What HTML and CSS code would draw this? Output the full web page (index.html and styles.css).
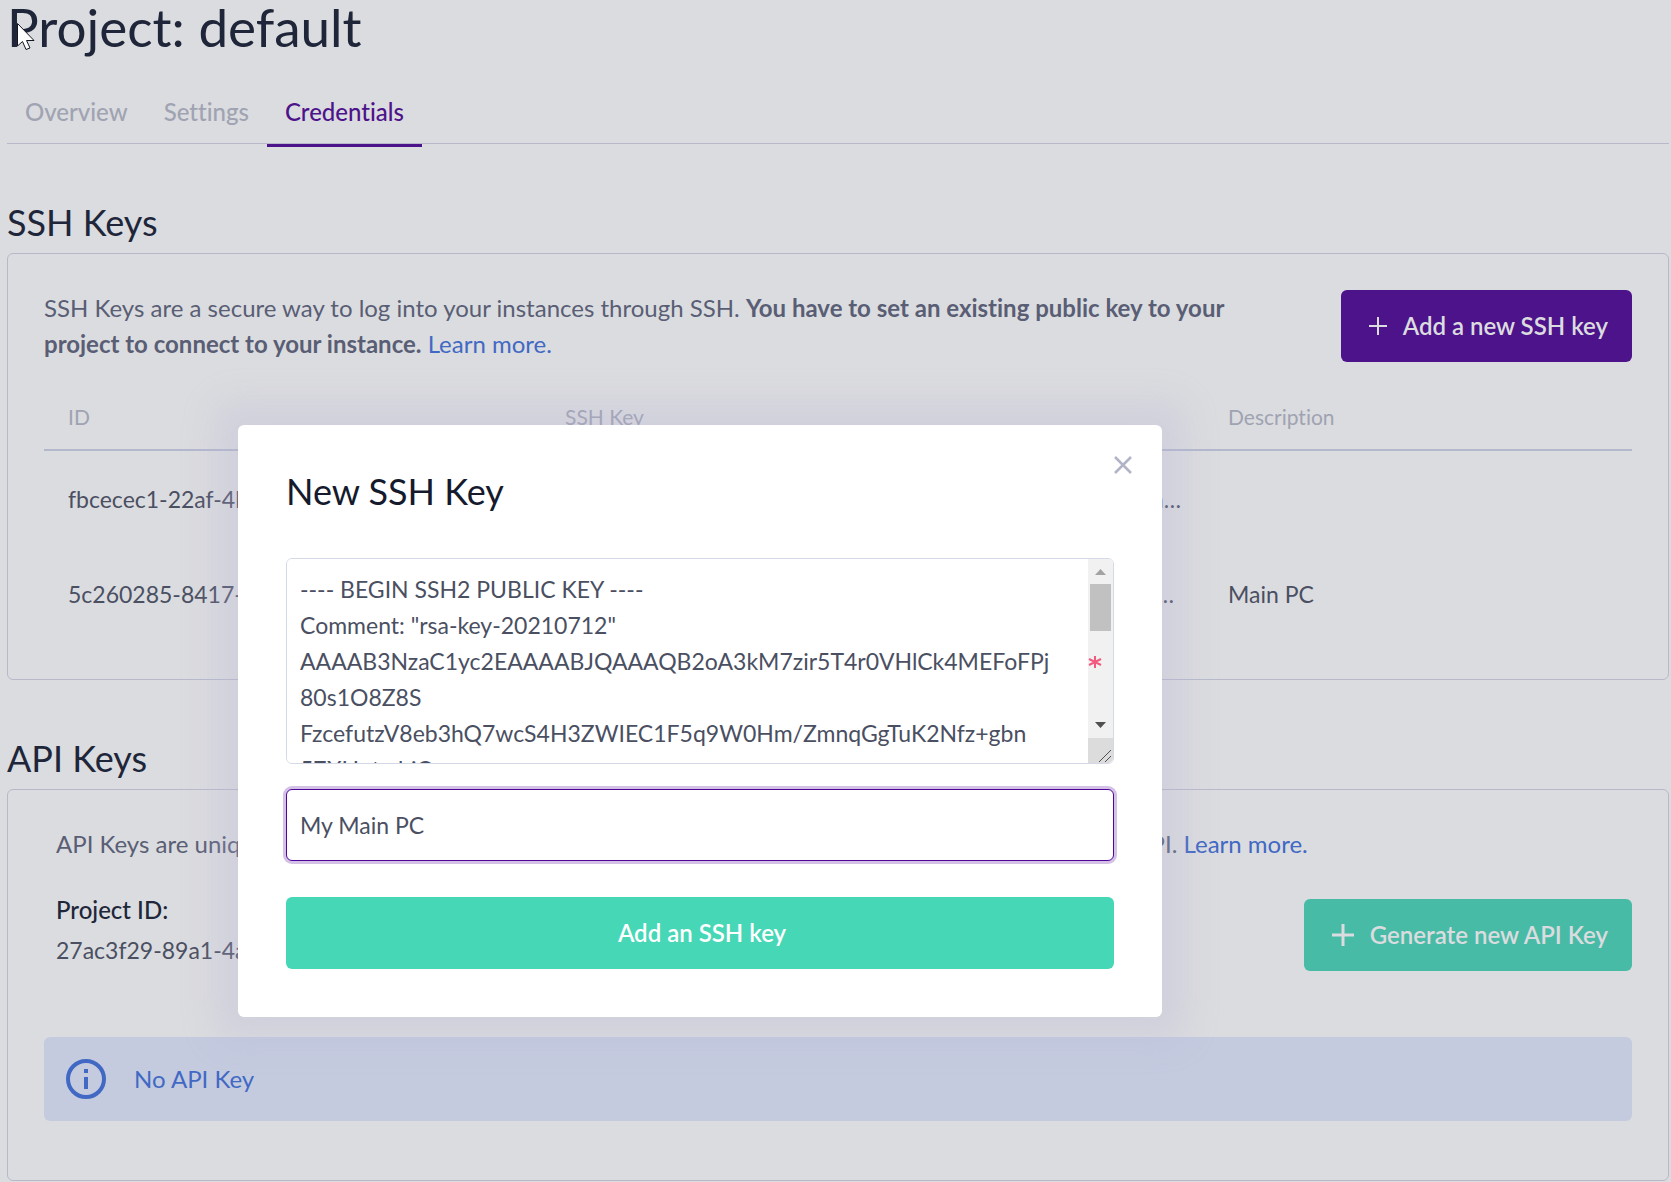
FILE: index.html
```html
<!DOCTYPE html>
<html lang="en">
<head>
  <meta charset="utf-8">
  <meta name="viewport" content="width=device-width, initial-scale=1">
  <title>Project: default</title>
  <link rel="stylesheet" href="styles.css">
</head>
<body>
  <main class="page">
    <h1 class="page-title">Project: default</h1>
    <nav class="tabs">
      <a class="tab" href="#overview">Overview</a>
      <a class="tab" href="#settings">Settings</a>
      <a class="tab tab-active" href="#credentials" aria-current="page">Credentials</a>
    </nav>

    <section class="section">
      <h2 class="section-title">SSH Keys</h2>
      <div class="card">
        <div class="card-head">
          <p class="intro">SSH Keys are a secure way to log into your instances through SSH. <strong>You have to set an existing public key to your project to connect to your instance.</strong> <a class="link" href="#ssh-docs">Learn more.</a></p>
          <button class="button button-primary" type="button">
            <svg width="18" height="18" viewBox="0 0 18 18" aria-hidden="true"><path d="M9 0V18M0 9H18" stroke="currentColor" stroke-width="2" fill="none"/></svg>
            Add a new SSH key
          </button>
        </div>
        <table class="keys">
          <colgroup><col class="col-id"><col class="col-key"><col class="col-description"></colgroup>
          <thead>
            <tr><th scope="col">ID</th><th scope="col">SSH Key</th><th scope="col">Description</th></tr>
          </thead>
          <tbody>
            <tr><td>fbcecec1-22af-4b0e-9d3c-6a1f0c7be215</td><td>ssh-rsa AAAAB3NzaC1yc2EAAAADAQABAAABAQC7vbqajDhA0c4yV1mKq8d2fHs</td><td></td></tr>
            <tr><td>5c260285-8417-4f6d-a1b9-0e3d7c52f8aa</td><td>ssh-rsa AAAAB3NzaC1yc2EAAAABJQAAAQEAk5mTz0pWc9uRr3nXyLq7eGd1sYb</td><td>Main PC</td></tr>
          </tbody>
        </table>
      </div>
    </section>

    <section class="section">
      <h2 class="section-title">API Keys</h2>
      <div class="card card-api">
        <div class="api-body">
          <p class="intro">API Keys are unique identifiers and secrets. You need an API key to send authenticated requests to the API. <a class="link" href="#api-docs">Learn more.</a></p>
          <div class="project-row">
            <dl class="project">
              <dt>Project ID:</dt>
              <dd>27ac3f29-89a1-4a7e-b5d0-91c3e8f4627b</dd>
            </dl>
            <button class="button button-success" type="button">
              <svg width="22" height="22" viewBox="0 0 22 22" aria-hidden="true"><path d="M11 0V22M0 11H22" stroke="currentColor" stroke-width="3" fill="none"/></svg>
              Generate new API Key
            </button>
          </div>
        </div>
        <div class="notice">
          <svg width="40" height="40" viewBox="0 0 40 40" aria-hidden="true"><circle cx="20" cy="20" r="18" fill="none" stroke="currentColor" stroke-width="4"/><path d="M18 10h4v4h-4zM18 18h4v12h-4z" fill="currentColor"/></svg>
          <span>No API Key</span>
        </div>
      </div>
    </section>
  </main>

  <div class="overlay">
    <form class="modal" role="dialog" aria-labelledby="modal-title">
      <button class="close" type="button" aria-label="Close">
        <svg width="18" height="18" viewBox="0 0 18 18" aria-hidden="true"><path d="M1 1L17 17M17 1L1 17" stroke="currentColor" stroke-width="2.5" fill="none"/></svg>
      </button>
      <h2 class="modal-title" id="modal-title">New SSH Key</h2>
      <div class="key-field">
        <label class="sr-only" for="key">SSH key</label>
        <textarea class="field field-key" id="key" required spellcheck="false">---- BEGIN SSH2 PUBLIC KEY ----
Comment: "rsa-key-20210712"
AAAAB3NzaC1yc2EAAAABJQAAAQB2oA3kM7zir5T4r0VHlCk4MEFoFPj
80s1O8Z8S
FzcefutzV8eb3hQ7wcS4H3ZWIEC1F5q9W0Hm/ZmnqGgTuK2Nfz+gbn
57XHutwbiO
b9dKxRq2mVt7LwYp0sNc3eJfGh5UaZi8oTlDkWvXyBnMrQ1
4PgSjE6uF
c2HqLz8sRt0vKwYxN5mBf7JdGp3oUeAi9TlCkXhQyVnZrW1
6bMgPjD4u
q8RtKxLz5vNwYs0mHc7eJfBd2UaGi3oTpEkWvXyQnSrF9
1ZgMjC6u
t4YqNz7sLt2vRwKxP0mGf
---- END SSH2 PUBLIC KEY ----</textarea>
        <div class="scrollbar" aria-hidden="true">
          <svg width="25" height="25" viewBox="0 0 25 25"><path d="M7 16L12.500 10L18 16Z" fill="#a3a3a3"/></svg>
          <div class="scrollbar-thumb"></div>
          <svg class="scrollbar-down" width="25" height="25" viewBox="0 0 25 25"><path d="M7 9L12.500 15L18 9Z" fill="#505050"/></svg>
          <svg class="scrollbar-grip" width="25" height="25" viewBox="0 0 25 25"><path d="M11 24L23 12M17 24L23 18" stroke="#505050" fill="none"/></svg>
        </div>
        <span class="required" aria-hidden="true"><svg width="14" height="14" viewBox="0 0 14 14"><path d="M7 1V13M1 4L13 10M13 4L1 10" stroke="currentColor" stroke-width="2" fill="none"/></svg></span>
      </div>
      <label class="sr-only" for="description">Description</label>
      <input class="field field-description" id="description" type="text" value="My Main PC">
      <button class="button button-submit" type="submit">Add an SSH key</button>
    </form>
  </div>

  <svg class="pointer" width="20" height="29" viewBox="0 0 20 29" aria-hidden="true"><path d="M1.500 1.500V24L6.500 19.500L10 27.500L14 26L10.500 18.500H18Z" fill="#fff" stroke="#14161f" stroke-width="1"/></svg>
</body>
</html>
```
FILE: styles.css
```css
* {
  box-sizing: border-box;
}

body {
  position: relative;
  margin: 0;
  background: #dbdcdf;
  color: #4a4f62;
  font-family: Lato, "Noto Sans", sans-serif;
  font-size: 24px;
  font-variant-ligatures: none;
  line-height: 36px;
}

h1, h2, p, dl, dd {
  margin: 0;
}

button, input, textarea {
  font: inherit;
}

.sr-only {
  position: absolute;
  width: 1px;
  height: 1px;
  overflow: hidden;
  clip-path: inset(50%);
}

.page {
  padding: 0 2px 0 7px;
}

.page-title {
  color: #20263a;
  font-size: 53px;
  font-weight: 400;
  line-height: 54px;
}

.tabs {
  display: flex;
  height: 90px;
  align-items: flex-end;
  border-bottom: 1px solid #b7b9cb;
}

.tab {
  height: 53px;
  margin-bottom: -4px;
  padding: 0 18px;
  border-bottom: 3px solid transparent;
  color: #9fa3b2;
  font-weight: 500;
  text-decoration: none;
}

.tab-active {
  border-bottom-color: #4d138b;
  color: #4d138b;
}

.section {
  padding-top: 56px;
}

.section-title {
  margin-bottom: 8px;
  color: #20263a;
  font-size: 36px;
  font-weight: 400;
  line-height: 45px;
}

.card {
  padding: 36px;
  border: 1px solid #b7b9cb;
  border-radius: 6px;
}

.card-head {
  display: flex;
  justify-content: space-between;
  gap: 100px;
}

.intro {
  color: #595e75;
}

.link {
  color: #4169c4;
  text-decoration: none;
}

.button {
  display: flex;
  flex: none;
  gap: 16px;
  align-items: center;
  justify-content: center;
  height: 72px;
  padding: 0 24px 0 28px;
  border: 0;
  border-radius: 6px;
  color: #dbdcdf;
  font-weight: 600;
}

.button-primary {
  background: #4d138b;
}

.button-success {
  background: #47bba6;
}

.keys {
  width: 100%;
  margin: 31px 0 1px;
  border-collapse: collapse;
  table-layout: fixed;
}

.col-id {
  width: 497px;
}

.col-description {
  width: 428px;
}

.keys th,
.keys td {
  overflow: hidden;
  padding: 0 20px 0 24px;
  text-align: left;
  text-overflow: ellipsis;
  white-space: nowrap;
}

.keys th {
  height: 57px;
  padding-bottom: 9px;
  border-bottom: 2px solid #b3b8cd;
  color: #9fa3b2;
  font-size: 21px;
  font-weight: 400;
}

.keys td {
  height: 96px;
  font-size: 23px;
}

.card-api {
  padding-bottom: 59px;
}

.api-body {
  padding-left: 12px;
}

.project-row {
  display: flex;
  justify-content: space-between;
  align-items: flex-end;
  padding: 30px 0 66px;
}

.project {
  padding-bottom: 3px;
}

.project dt {
  color: #20263a;
  font-weight: 500;
}

.project dd {
  margin-top: 4px;
  font-size: 23px;
}

.notice {
  display: flex;
  align-items: center;
  gap: 28px;
  height: 84px;
  padding: 0 22px;
  border-radius: 6px;
  background: #c4cbdf;
  color: #4169c4;
}

.overlay {
  position: absolute;
  inset: 0;
  display: flex;
  align-items: flex-start;
  justify-content: center;
  padding: 425px 271px 0 0;
}

.modal {
  position: relative;
  display: flex;
  flex-direction: column;
  width: 924px;
  padding: 48px;
  border-radius: 6px;
  background: #fff;
  box-shadow: 0 0 32px 24px rgba(182, 178, 214, 0.28);
}

.modal-title {
  margin-bottom: 48px;
  color: #151a2d;
  font-size: 36px;
  font-weight: 400;
  line-height: 37px;
}

.close {
  position: absolute;
  top: 25px;
  right: 24px;
  display: flex;
  padding: 6px;
  border: 0;
  background: none;
  color: #b1b4c6;
}

.key-field {
  position: relative;
  height: 206px;
}

.field {
  display: block;
  width: 100%;
  border: 1px solid #d4d9e8;
  border-radius: 6px;
  outline: 0;
  background: #fff;
  color: #4a4f62;
  font-size: 23px;
}

.field-key {
  height: 206px;
  padding: 12px 38px 12px 13px;
  resize: none;
  scrollbar-width: none;
}

.scrollbar {
  position: absolute;
  inset: 1px 1px 1px auto;
  display: flex;
  flex-direction: column;
  border-radius: 0 5px 5px 0;
  overflow: hidden;
  background: #f1f1f1;
}

.scrollbar-thumb {
  height: 47px;
  margin: 0 2px;
  background: #c1c1c1;
}

.scrollbar-down {
  margin-top: auto;
}

.scrollbar-grip {
  background: #dcdcdc;
}

.required {
  position: absolute;
  top: 97px;
  right: 12px;
  display: flex;
  color: #f5587f;
}

.field-description {
  height: 72px;
  margin: 25px 0 36px;
  padding: 0 13px;
  border-color: #4f0599;
  box-shadow: 0 0 0 3px #d3c1e6;
}

.button-submit {
  background: #46d7b6;
  color: #fff;
}

.pointer {
  position: absolute;
  top: 22px;
  left: 16px;
}
```
